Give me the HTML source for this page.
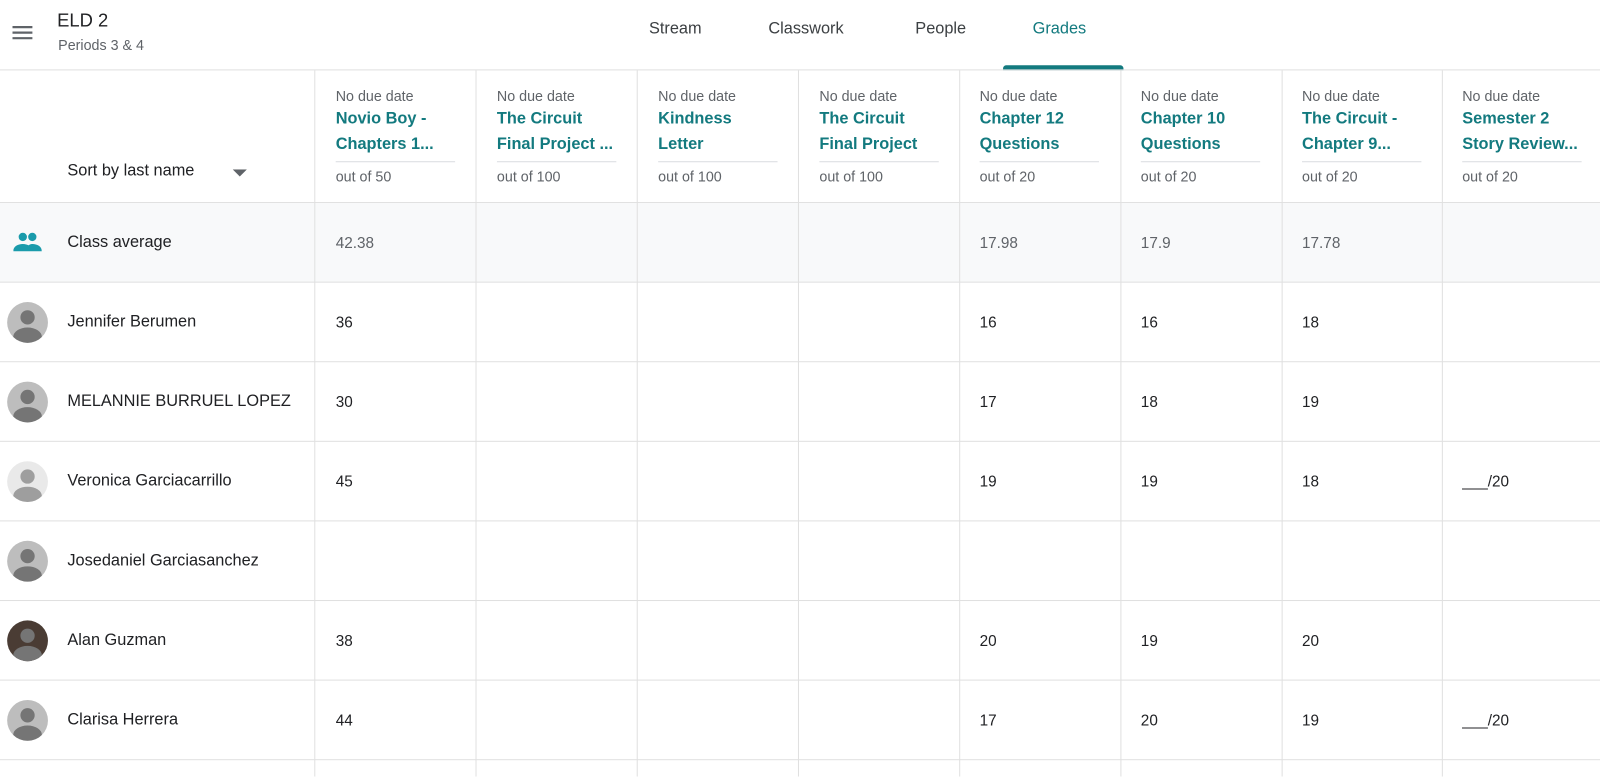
<!DOCTYPE html><html><head><style>
*{margin:0;padding:0;box-sizing:border-box}
body{width:1600px;height:761px;overflow:hidden;background:#fff;font-family:"Liberation Sans",sans-serif;color:#202124;position:relative}
#w{position:absolute;left:0;top:0;width:1600px;height:761px;transform:scale(1.0204);transform-origin:0 0}
.a{position:absolute;white-space:nowrap}
.hl{position:absolute;left:0;width:1600px;height:1px;background:#e0e0e0}
.vl{position:absolute;top:69px;height:692px;width:1px;background:#e0e0e0}
.tab{position:absolute;top:20px;font-size:16px;color:#3c4043}
.due{font-size:14px;color:#5f6368}
.ttl{font-size:16px;color:#137a7f;font-weight:bold;line-height:25px;margin-top:2px}
.out{font-size:14px;color:#5f6368}
.nm{font-size:16px;color:#202124}
.g{font-size:15px;color:#202124}
.av{position:absolute;left:7px;width:40px;height:40px;border-radius:50%;background:#bdbdbd;overflow:hidden}
.av::before{content:"";position:absolute;left:13px;top:8px;width:14px;height:14px;border-radius:50%;background:#757575}
.av::after{content:"";position:absolute;left:6px;top:25px;width:28px;height:18px;border-radius:50%;background:#757575}
</style></head><body><div id="w">
<svg class="a" style="left:9px;top:19px" width="26" height="26" viewBox="0 0 24 24"><path d="M3 6h18v2H3zM3 11h18v2H3zM3 16h18v2H3z" fill="#5f6368"/></svg>
<div class="a" style="left:56px;top:10px;font-size:18px;color:#202124">ELD 2</div>
<div class="a" style="left:57px;top:36px;font-size:14px;color:#5f6368">Periods 3 &amp; 4</div>
<div class="tab" style="left:636px">Stream</div>
<div class="tab" style="left:753px">Classwork</div>
<div class="tab" style="left:897px">People</div>
<div class="tab" style="left:1012px;color:#137a7f">Grades</div>
<div class="a" style="left:983px;top:64px;width:118px;height:5px;background:#137a7f;border-radius:3px 3px 0 0"></div>
<div class="hl" style="top:68px"></div>
<div class="hl" style="top:198px"></div>
<div class="a" style="left:0;top:199px;width:1600px;height:78px;background:#f8f9fa"></div>
<div class="hl" style="top:276px"></div><div class="hl" style="top:354px"></div><div class="hl" style="top:432px"></div><div class="hl" style="top:510px"></div><div class="hl" style="top:588px"></div><div class="hl" style="top:666px"></div><div class="hl" style="top:744px"></div>
<div class="vl" style="left:308px"></div><div class="vl" style="left:466px"></div><div class="vl" style="left:624px"></div><div class="vl" style="left:782px"></div><div class="vl" style="left:940px"></div><div class="vl" style="left:1098px"></div><div class="vl" style="left:1256px"></div><div class="vl" style="left:1413px"></div>
<div class="a nm" style="left:66px;top:159px">Sort by last name</div>
<svg class="a" style="left:228px;top:166px" width="14" height="8"><path d="M0 0h14L7 7z" fill="#5f6368"/></svg>

<div class="a" style="left:329px;top:86px"><div class="due">No due date</div><div class="ttl">Novio Boy -<br>Chapters 1...</div><div style="width:117px;height:1px;background:#dadce0;margin-top:4px"></div><div class="out" style="margin-top:6px">out of 50</div></div>
<div class="a" style="left:487px;top:86px"><div class="due">No due date</div><div class="ttl">The Circuit<br>Final Project ...</div><div style="width:117px;height:1px;background:#dadce0;margin-top:4px"></div><div class="out" style="margin-top:6px">out of 100</div></div>
<div class="a" style="left:645px;top:86px"><div class="due">No due date</div><div class="ttl">Kindness<br>Letter</div><div style="width:117px;height:1px;background:#dadce0;margin-top:4px"></div><div class="out" style="margin-top:6px">out of 100</div></div>
<div class="a" style="left:803px;top:86px"><div class="due">No due date</div><div class="ttl">The Circuit<br>Final Project</div><div style="width:117px;height:1px;background:#dadce0;margin-top:4px"></div><div class="out" style="margin-top:6px">out of 100</div></div>
<div class="a" style="left:960px;top:86px"><div class="due">No due date</div><div class="ttl">Chapter 12<br>Questions</div><div style="width:117px;height:1px;background:#dadce0;margin-top:4px"></div><div class="out" style="margin-top:6px">out of 20</div></div>
<div class="a" style="left:1118px;top:86px"><div class="due">No due date</div><div class="ttl">Chapter 10<br>Questions</div><div style="width:117px;height:1px;background:#dadce0;margin-top:4px"></div><div class="out" style="margin-top:6px">out of 20</div></div>
<div class="a" style="left:1276px;top:86px"><div class="due">No due date</div><div class="ttl">The Circuit -<br>Chapter 9...</div><div style="width:117px;height:1px;background:#dadce0;margin-top:4px"></div><div class="out" style="margin-top:6px">out of 20</div></div>
<div class="a" style="left:1433px;top:86px"><div class="due">No due date</div><div class="ttl">Semester 2<br>Story Review...</div><div style="width:117px;height:1px;background:#dadce0;margin-top:4px"></div><div class="out" style="margin-top:6px">out of 20</div></div>

<svg class="a" style="left:13px;top:226px" width="28" height="24" viewBox="0 0 24 20"><circle cx="8" cy="5" r="3.5" fill="#1a9bab"/><circle cx="16" cy="5" r="3.5" fill="#1a9bab"/><path d="M0 17c0-4 4-6 8-6s8 2 8 6zM10 17c0-3 3-6 6-6 4 0 8 2 8 6z" fill="#1a9bab"/></svg>
<div class="a nm" style="left:66px;top:229px">Class average</div>
<div class="a g" style="left:329px;top:230px;color:#5f6368">42.38</div>
<div class="a g" style="left:960px;top:230px;color:#5f6368">17.98</div>
<div class="a g" style="left:1118px;top:230px;color:#5f6368">17.9</div>
<div class="a g" style="left:1276px;top:230px;color:#5f6368">17.78</div>

<div class="av" style="top:296px"></div><div class="a nm" style="left:66px;top:307px">Jennifer Berumen</div>
<div class="a g" style="left:329px;top:308px">36</div><div class="a g" style="left:960px;top:308px">16</div><div class="a g" style="left:1118px;top:308px">16</div><div class="a g" style="left:1276px;top:308px">18</div>

<div class="av" style="top:374px"></div><div class="a nm" style="left:66px;top:385px">MELANNIE BURRUEL LOPEZ</div>
<div class="a g" style="left:329px;top:386px">30</div><div class="a g" style="left:960px;top:386px">17</div><div class="a g" style="left:1118px;top:386px">18</div><div class="a g" style="left:1276px;top:386px">19</div>

<div class="av" style="top:452px;background:#e0e0e0;opacity:.7"></div><div class="a nm" style="left:66px;top:463px">Veronica Garciacarrillo</div>
<div class="a g" style="left:329px;top:464px">45</div><div class="a g" style="left:960px;top:464px">19</div><div class="a g" style="left:1118px;top:464px">19</div><div class="a g" style="left:1276px;top:464px">18</div><div class="a g" style="left:1433px;top:464px">___/20</div>

<div class="av" style="top:530px"></div><div class="a nm" style="left:66px;top:541px">Josedaniel Garciasanchez</div>

<div class="av" style="top:608px;background:#4a3c34"></div><div class="a nm" style="left:66px;top:619px">Alan Guzman</div>
<div class="a g" style="left:329px;top:620px">38</div><div class="a g" style="left:960px;top:620px">20</div><div class="a g" style="left:1118px;top:620px">19</div><div class="a g" style="left:1276px;top:620px">20</div>

<div class="av" style="top:686px"></div><div class="a nm" style="left:66px;top:697px">Clarisa Herrera</div>
<div class="a g" style="left:329px;top:698px">44</div><div class="a g" style="left:960px;top:698px">17</div><div class="a g" style="left:1118px;top:698px">20</div><div class="a g" style="left:1276px;top:698px">19</div><div class="a g" style="left:1433px;top:698px">___/20</div>
</div></body></html>
